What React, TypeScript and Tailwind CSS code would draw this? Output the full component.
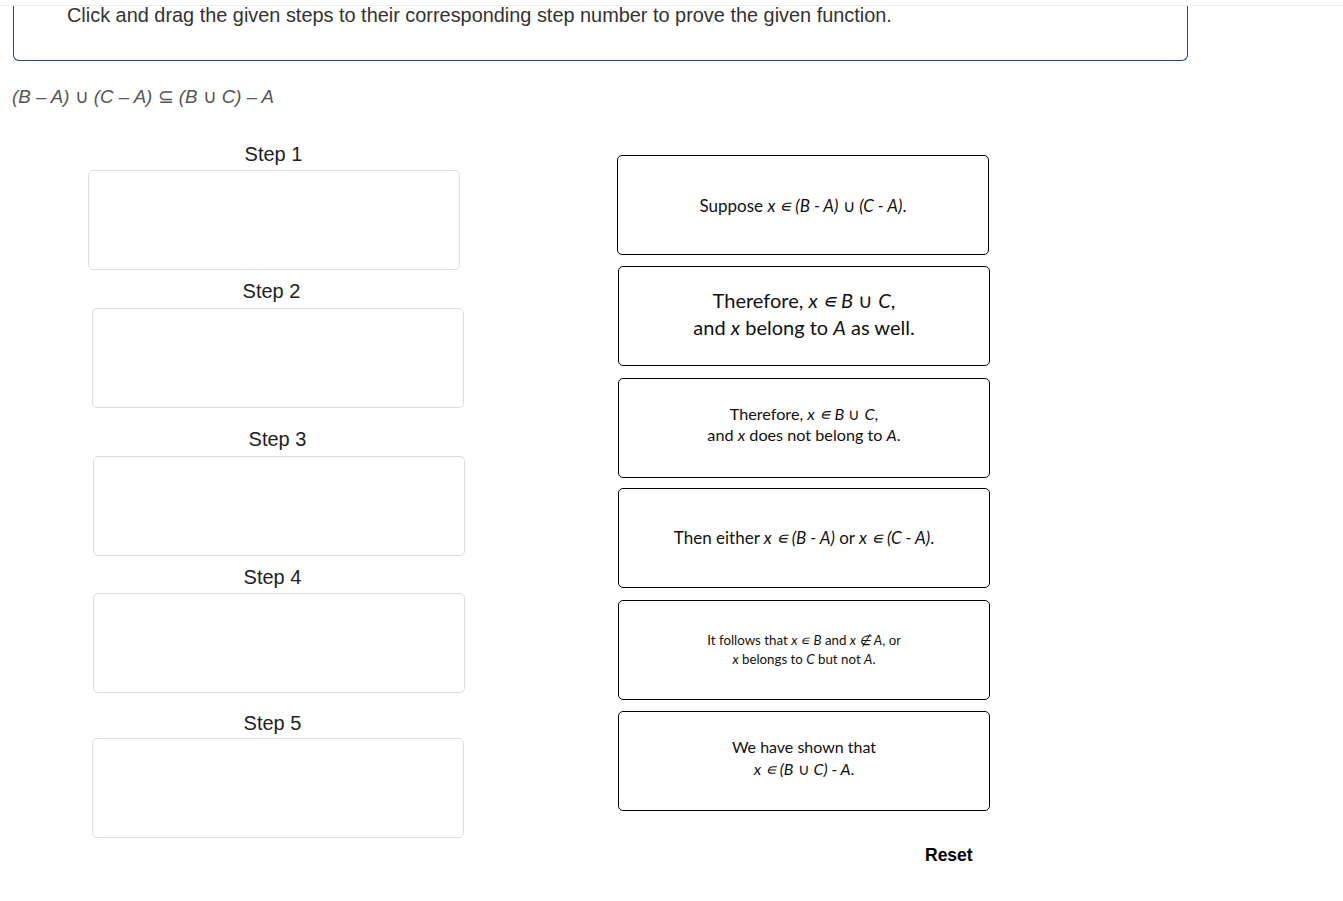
import React from 'react';

const M = ({ children }: { children: React.ReactNode }) => <i className="italic">{children}</i>;

const steps = [
  { label: 'Step 1', labelMt: 'mt-[34px]', labelMl: 'ml-0', boxMt: 'mt-[5px]', boxMl: 'ml-0' },
  { label: 'Step 2', labelMt: 'mt-[10px]', labelMl: 'ml-[-2px]', boxMt: 'mt-[6px]', boxMl: 'ml-[4px]' },
  { label: 'Step 3', labelMt: 'mt-[20px]', labelMl: 'ml-[4px]', boxMt: 'mt-[6px]', boxMl: 'ml-[5px]' },
  { label: 'Step 4', labelMt: 'mt-[10px]', labelMl: 'ml-[-1px]', boxMt: 'mt-[5px]', boxMl: 'ml-[5px]' },
  { label: 'Step 5', labelMt: 'mt-[19px]', labelMl: 'ml-[-1px]', boxMt: 'mt-[4px]', boxMl: 'ml-[4px]' },
];

const Card = ({ className, children }: { className: string; children: React.ReactNode }) => (
  <div
    className={`w-[372px] h-[100px] border border-black rounded-[5px] flex flex-col items-center justify-center text-center text-[#111] font-['Lato',sans-serif] ${className}`}
  >
    {children}
  </div>
);

export default function App() {
  return (
    <div className="min-h-screen bg-white font-['Liberation_Sans',Arial,sans-serif]">
      <div className="mt-[5px] border-t border-[#ececec]">
        <div className="ml-[13px] w-[1175px] h-[55px] border-x border-b border-[#1d4a80] rounded-b-[6px] pl-[53px]">
          <p className="text-[19.9px] leading-[19px] text-[#333]">
            Click and drag the given steps to their corresponding step number to prove the given function.
          </p>
        </div>
      </div>

      <p className="mt-[24px] ml-[12px] text-[18.7px] leading-[24px] text-[#555] italic">
        (B – A) <span className="not-italic">∪</span> (C – A) <span className="not-italic">⊆</span> (B{' '}
        <span className="not-italic">∪</span> C) – A
      </p>

      <div className="flex">
        <div className="w-[617px] pl-[88px] flex flex-col">
          {steps.map((s) => (
            <React.Fragment key={s.label}>
              <div className={`w-[371px] h-[22px] text-center text-[20px] leading-[22px] text-[#222] ${s.labelMt} ${s.labelMl}`}>
                {s.label}
              </div>
              <div className={`w-[372px] h-[100px] border border-[#dcdcdc] rounded-[5px] ${s.boxMt} ${s.boxMl}`} />
            </React.Fragment>
          ))}
        </div>

        <div className="flex flex-col">
          <Card className="mt-[46px] text-[17px] leading-[20px] pt-[2px]">
            <span>
              Suppose <M>x ∊ (B - A)</M> ∪ <M>(C - A)</M>.
            </span>
          </Card>
          <Card className="mt-[11px] ml-[1px] text-[20px] leading-[27px] pb-[4px]">
            <span>
              Therefore, <M>x ∊ B</M> ∪ <M>C</M>,
            </span>
            <span>
              and <M>x</M> belong to <M>A</M> as well.
            </span>
          </Card>
          <Card className="mt-[12px] ml-[1px] text-[16.2px] leading-[21px] pb-[9px]">
            <span>
              Therefore, <M>x ∊ B</M> ∪ <M>C</M>,
            </span>
            <span>
              and <M>x</M> does not belong to <M>A</M>.
            </span>
          </Card>
          <Card className="mt-[10px] ml-[1px] text-[17px] leading-[20px]">
            <span>
              Then either <M>x ∊ (B - A)</M> or <M>x ∊ (C - A)</M>.
            </span>
          </Card>
          <Card className="mt-[12px] ml-[1px] text-[13.3px] leading-[19px]">
            <span>
              It follows that <M>x ∊ B</M> and <M>x ∉ A</M>,{' '}
              <span className="font-['Liberation_Sans',Arial,sans-serif] text-[13.5px]">or</span>
            </span>
            <span>
              <M>x</M> belongs to <M>C</M> but not <M>A</M>.
            </span>
          </Card>
          <Card className="mt-[11px] ml-[1px] text-[16px] leading-[22px] pb-[6px]">
            <span>We have shown that</span>
            <span>
              <M>x ∊ (B</M> ∪ <M>C) - A</M>.
            </span>
          </Card>
          <div className="mt-[34px] ml-[308px] text-[17.5px] leading-[20px] font-bold text-black">Reset</div>
        </div>
      </div>
    </div>
  );
}
